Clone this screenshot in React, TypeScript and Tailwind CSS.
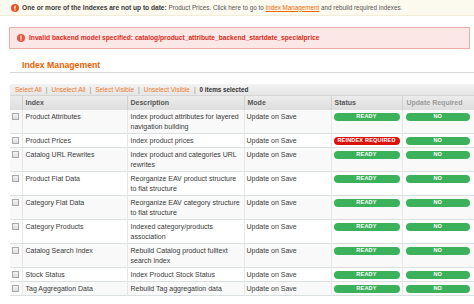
import React from 'react';

type Row = {
  name: string;
  desc: string;
  status: 'ready' | 'reindex';
};

const rows: Row[] = [
  { name: 'Product Attributes', desc: 'Index product attributes for layered navigation building', status: 'ready' },
  { name: 'Product Prices', desc: 'Index product prices', status: 'reindex' },
  { name: 'Catalog URL Rewrites', desc: 'Index product and categories URL rewrites', status: 'ready' },
  { name: 'Product Flat Data', desc: 'Reorganize EAV product structure to flat structure', status: 'ready' },
  { name: 'Category Flat Data', desc: 'Reorganize EAV category structure to flat structure', status: 'ready' },
  { name: 'Category Products', desc: 'Indexed category/products association', status: 'ready' },
  { name: 'Catalog Search Index', desc: 'Rebuild Catalog product fulltext search index', status: 'ready' },
  { name: 'Stock Status', desc: 'Index Product Stock Status', status: 'ready' },
  { name: 'Tag Aggregation Data', desc: 'Rebuild Tag aggregation data', status: 'ready' },
];

const AlertIcon: React.FC<{ color: string }> = ({ color }) => (
  <svg width="8" height="8" viewBox="0 0 16 16" className="shrink-0">
    <circle cx="8" cy="8" r="8" fill={color} />
    <rect x="6.8" y="3" width="2.4" height="6.5" rx="1" fill="#fff" />
    <circle cx="8" cy="12" r="1.3" fill="#fff" />
  </svg>
);

const Pill: React.FC<{ red?: boolean; children: React.ReactNode }> = ({ red, children }) => (
  <div
    className={`h-[8px] rounded-full flex items-center justify-center text-white font-bold text-[5.5px] leading-none tracking-[0.2px] ${
      red ? 'bg-[#d9120c]' : 'bg-[#3bb15b]'
    }`}
  >
    {children}
  </div>
);

const App: React.FC = () => {
  return (
    <div className="w-[474px] h-[304px] overflow-hidden bg-white text-[#3a3a3a] font-['Liberation_Sans',Arial,sans-serif] text-[7px]">
      {/* Top notice */}
      <div className="h-[16px] bg-[#fcf9ee] border-b border-[#f3ecd6] flex items-center pl-[11px] gap-[3px]">
        <AlertIcon color="#e2542c" />
        <span className="whitespace-nowrap text-[#555] text-[6.3px]">
          <b className="text-[#3a3a3a] text-[6.6px]">One or more of the Indexes are not up to date:</b> Product Prices. Click here to go to{' '}
          <span className="text-[#eb6a06] underline">Index Management</span> and rebuild required indexes.
        </span>
      </div>

      {/* Error box */}
      <div className="mt-[11px] ml-[9px] mr-[4px] h-[22px] bg-[#fbe7e5] border border-[#efaca7] flex items-center pl-[7px] gap-[4px]">
        <AlertIcon color="#e25a45" />
        <span className="font-bold text-[#dc2b1a] whitespace-nowrap text-[6.65px]">
          Invalid backend model specified: catalog/product_attribute_backend_startdate_specialprice
        </span>
      </div>

      {/* Heading */}
      <div className="mt-[11px] ml-[10px] border-b border-[#d8d8d8] h-[13px] pl-[12px]">
        <h2 className="text-[8.7px] leading-[10px] font-bold text-[#eb5e00]">Index Management</h2>
      </div>

      {/* Massaction bar */}
      <div className="mt-[11px] ml-[10px] h-[12px] bg-gradient-to-b from-[#f3f3f3] to-[#e6e6e6] border-b border-[#d6d6d6] flex items-center pl-[5px] text-[6.5px] whitespace-nowrap">
        <span className="text-[#eb7a2c]">Select All</span>
        <span className="mx-[4px] text-[#888]">|</span>
        <span className="text-[#eb7a2c]">Unselect All</span>
        <span className="mx-[4px] text-[#888]">|</span>
        <span className="text-[#eb7a2c]">Select Visible</span>
        <span className="mx-[4px] text-[#888]">|</span>
        <span className="text-[#eb7a2c]">Unselect Visible</span>
        <span className="mx-[4px] text-[#888]">|</span>
        <span className="font-bold text-[#333] text-[6.3px]">0 items selected</span>
      </div>

      {/* Grid */}
      <table className="ml-[10px] w-[464px] table-fixed border-collapse">
        <colgroup>
          <col className="w-[12px]" />
          <col className="w-[105px]" />
          <col className="w-[117px]" />
          <col className="w-[87px]" />
          <col className="w-[71px]" />
          <col className="w-[72px]" />
        </colgroup>
        <thead>
          <tr className="h-[14px] bg-gradient-to-b from-[#ececec] to-[#dedede] text-left">
            <th className="border-r border-[#d0d0d0]" />
            <th className="pl-[3px] font-bold text-[#555] border-r border-[#d0d0d0]">Index</th>
            <th className="pl-[3px] font-bold text-[#555] border-r border-[#d0d0d0]">Description</th>
            <th className="pl-[3px] font-bold text-[#555] border-r border-[#d0d0d0]">Mode</th>
            <th className="pl-[3px] font-bold text-[#555] border-r border-[#d0d0d0]">Status</th>
            <th className="pl-[4px] font-bold text-[#9a9a9a]">Update Required</th>
          </tr>
        </thead>
        <tbody>
          {rows.map((r, i) => (
            <tr key={r.name} className={`${i % 2 === 1 ? 'bg-white' : 'bg-[#f9f9f9]'} border-b border-[#dadfe0] align-top leading-[10px]`}>
              <td className="border-r border-[#e4e8e9] pt-[3px] pl-[2px]">
                <div className="w-[7px] h-[7px] border border-[#a9a9a9] bg-gradient-to-b from-[#f4f4f4] to-[#dcdcdc]" />
              </td>
              <td className="border-r border-[#e4e8e9] py-[1.5px] pl-[3px] pr-[2px]">{r.name}</td>
              <td className="border-r border-[#e4e8e9] py-[1.5px] pl-[3px] pr-[2px]">{r.desc}</td>
              <td className="border-r border-[#e4e8e9] py-[1.5px] pl-[2px]">Update on Save</td>
              <td className="border-r border-[#e4e8e9] pt-[2.5px] px-[2px]">
                {r.status === 'ready' ? <Pill>READY</Pill> : <Pill red>REINDEX REQUIRED</Pill>}
              </td>
              <td className="pt-[2.5px] pl-[3px] pr-[4px]">
                <Pill>NO</Pill>
              </td>
            </tr>
          ))}
        </tbody>
      </table>
    </div>
  );
};

export default App;
